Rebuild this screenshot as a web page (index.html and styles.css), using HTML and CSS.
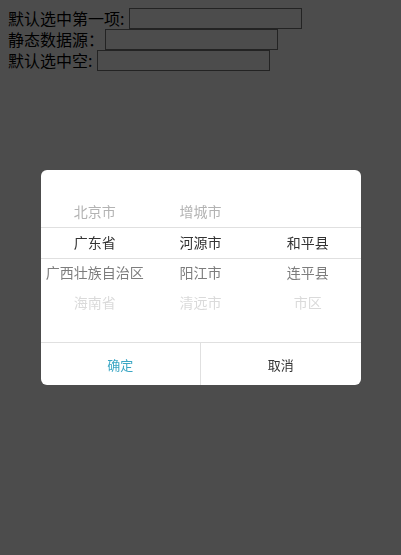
FILE: index.html
```html
<!doctype html>
<html>
<head>
<meta charset="utf-8">
<title>省市区选择</title>
<link rel="stylesheet" href="styles.css">
</head>
<body>
<div class="form">
	<div class="line">默认选中第一项:<input type="text" class="ipt"></div>
	<div class="line">静态数据源：<input type="text" class="ipt ipt2"></div>
	<div class="line">默认选中空:<input type="text" class="ipt"></div>
</div>

<!-- 弹层 -->
<div class="mask">
	<div class="picker">
		<div class="wheel">
			<div class="row far1"><span>北京市</span><span>增城市</span><span></span></div>
			<div class="row cur"><span>广东省</span><span>河源市</span><span>和平县</span></div>
			<div class="row near"><span>广西壮族自治区</span><span>阳江市</span><span>连平县</span></div>
			<div class="row far2"><span>海南省</span><span>清远市</span><span>市区</span></div>
		</div>
		<div class="btns">
			<a href="javascript:;" class="ok">确定</a>
			<a href="javascript:;" class="cancel">取消</a>
		</div>
	</div>
</div>
</body>
</html>
```
FILE: styles.css
```css
*{ margin:0; padding:0; box-sizing:border-box;}
a{ text-decoration:none;}
body{ margin:8px; font-family:"Noto Sans CJK SC","Liberation Sans",sans-serif; font-size:16px; color:#000; background:#fff;}

.form .line{ height:21px; line-height:21px; white-space:nowrap;}
.form .ipt{ width:173px; height:21px; margin-left:5px; border:1px solid #767676; vertical-align:top; background:#fff;}
.form .ipt2{ margin-left:1px;}

.mask{ position:fixed; left:0; top:0; right:0; bottom:0; background:rgba(0,0,0,.7); display:flex; align-items:center; justify-content:center;}
.picker{ width:320px; height:215px; background:#fff; border-radius:6px; overflow:hidden; display:flex; flex-direction:column;}

.wheel{ height:173px; padding-top:27px; border-bottom:1px solid #e0e0e0; font-size:14px;}
.wheel .row{ display:grid; grid-template-columns:repeat(3,1fr); height:30px; line-height:28px; text-align:center; white-space:nowrap;}
.wheel .row span{ display:block;}
.wheel .row span:first-child{ padding-left:2px;}
.wheel .row span:last-child{ padding-left:1px;}
.wheel .far1{ color:#b3b3b3;}
.wheel .cur{ color:#333; height:32px; line-height:29px; border-top:1px solid #e0e0e0; border-bottom:1px solid #e0e0e0;}
.wheel .near{ color:#7d7d7d; line-height:26px;}
.wheel .far2{ color:#dadada; line-height:26px;}

.btns{ flex:1; display:flex; font-size:13px;}
.btns a{ flex:1; display:flex; align-items:center; justify-content:center;}
.btns .ok{ color:#3aa6c4; border-right:1px solid #e0e0e0;}
.btns .cancel{ color:#333;}
```
